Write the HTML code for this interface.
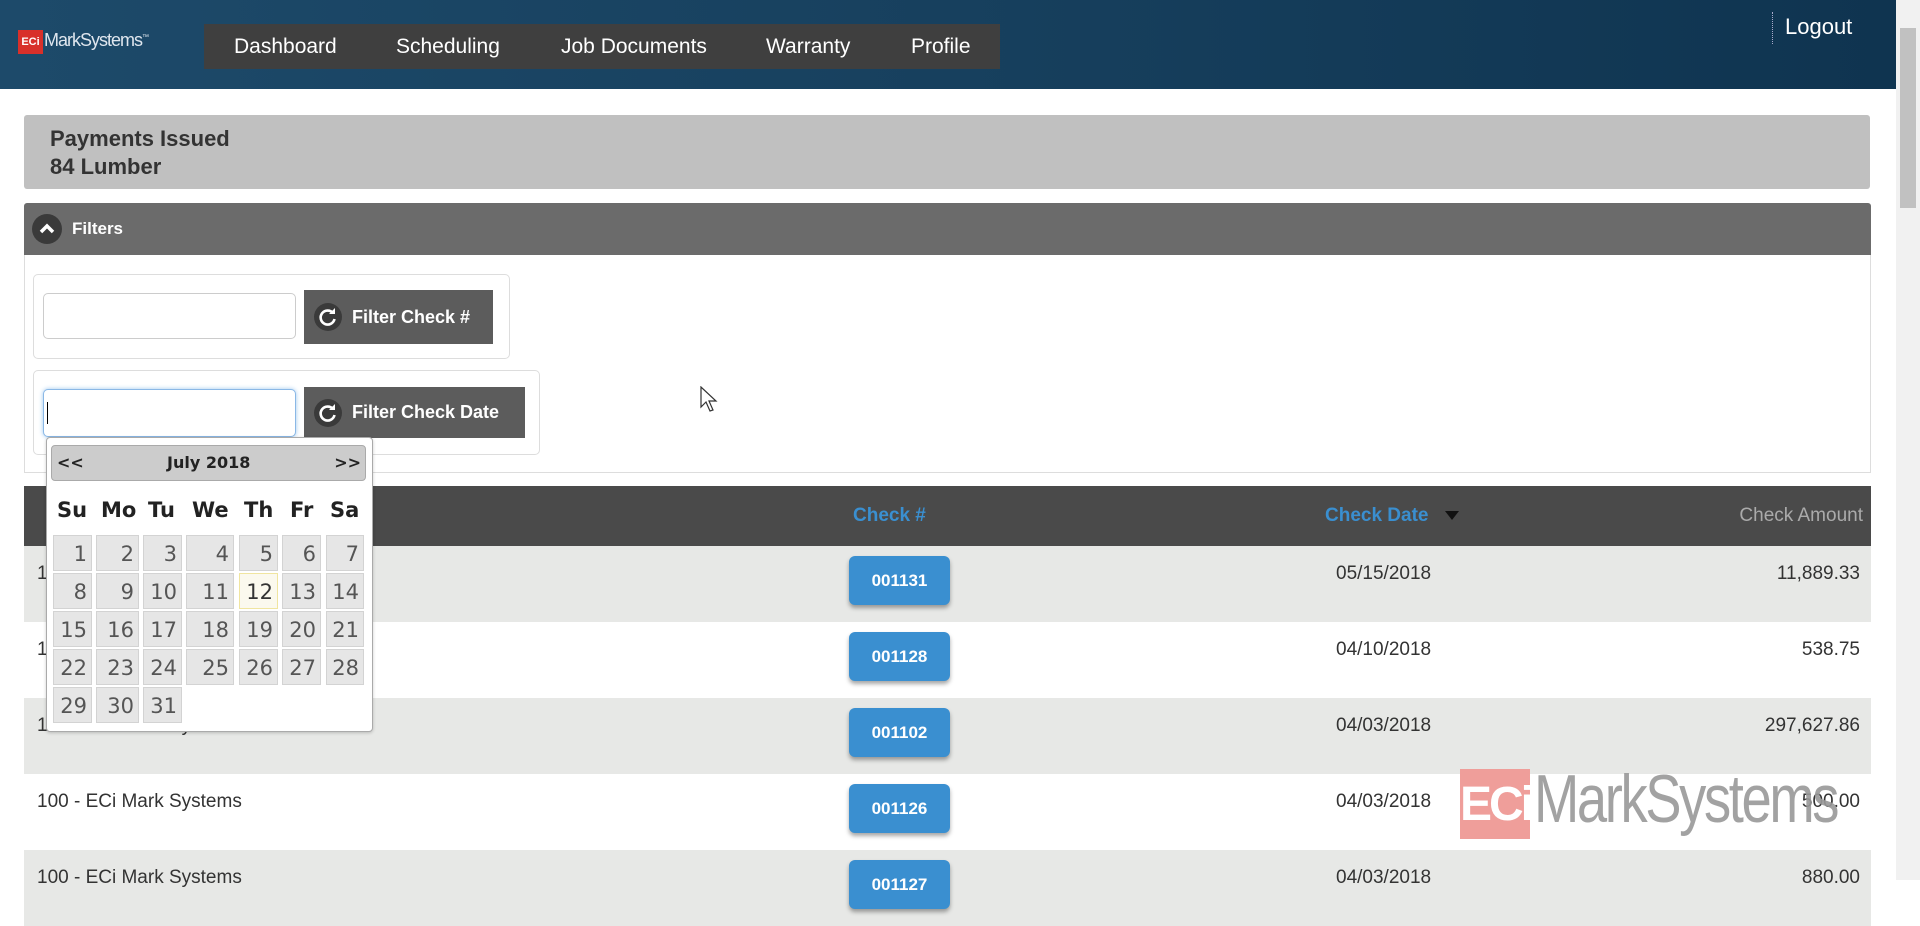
<!DOCTYPE html>
<html><head><meta charset="utf-8"><style>
*{box-sizing:border-box;margin:0;padding:0}
body{width:1920px;height:880px;overflow:hidden;background:#fff;font-family:"Liberation Sans",Arial,sans-serif;position:relative}
.abs{position:absolute}
.hdr{left:0;top:0;width:1896px;height:89px;background:linear-gradient(90deg,#1d4a6a,#17405e 50%,#0f3450);}
.nav{left:204px;top:24px;width:796px;height:45px;background:#3f3f3f;color:#fff;font-size:21px;white-space:nowrap}
.nav span{position:absolute;top:11px}
.sb{left:1896px;top:0;width:24px;height:880px;background:#f1f1f1}
.title{left:24px;top:115px;width:1846px;height:74px;background:#c0c0c0;border-radius:3px;font-weight:bold;font-size:22px;color:#333;padding:10px 26px;line-height:28px}
.fbar{left:24px;top:203px;width:1847px;height:52px;background:#6b6b6b;border-radius:3px 3px 0 0;color:#fff;font-weight:bold;font-size:17px;line-height:52px;padding-left:48px}
.fbody{left:24px;top:255px;width:1847px;height:218px;border:1px solid #ddd;border-top:none;background:#fff}
.box{border:1px solid #ddd;border-radius:5px}
.inp{border:1px solid #ccc;border-radius:5px;background:#fff}
.btn{background:#5c5c5c;color:#fff;font-weight:bold;font-size:18px;display:flex;align-items:center}
.ic{width:28px;height:28px;border-radius:50%;background:#3a3a3a;margin:0 10px 0 10px;display:flex;align-items:center;justify-content:center}
.th{left:24px;top:486px;width:1847px;height:60px;background:#4a4a4a}
.row{left:24px;width:1847px;height:76px;font-size:19px;color:#333}
.cb{position:absolute;left:825px;top:10px;width:101px;height:49px;background:#3a8fd0;border-radius:6px;color:#fff;font-weight:bold;font-size:17px;text-align:center;line-height:49px;box-shadow:0 3px 4px rgba(0,0,0,.35)}
.cal{left:46px;top:437px;width:327px;height:295px;background:#fff;border:1px solid #aaa;border-radius:4px;box-shadow:0 1px 3px rgba(0,0,0,.2);font-family:"DejaVu Sans",Verdana,sans-serif}
.ch{position:absolute;left:4px;top:7px;width:315px;height:36px;background:#ccc;border:1px solid #aaa;border-radius:4px;font-weight:bold;font-size:16px;line-height:34px;color:#222}
.cell{position:absolute;background:#e6e6e6;border:1px solid #d3d3d3;font-size:21px;color:#555;text-align:right;padding-right:4px;line-height:36px;height:36px}
.dn{position:absolute;top:60px;font-weight:bold;font-size:21px;color:#222}
</style></head><body>
<div class="abs hdr"></div>
<div class="abs" style="left:18px;top:30px;width:25px;height:24px;background:#d8302a;color:#fff;font-size:11px;font-weight:bold;line-height:24px;text-align:center">ECi</div>
<div class="abs" style="left:44px;top:30px;color:#dfe6ee;font-size:18px;letter-spacing:-1px">MarkSystems<sup style="font-size:7px">™</sup></div>
<div class="abs nav"><span style="left:30px">Dashboard</span><span style="left:192px">Scheduling</span><span style="left:357px">Job Documents</span><span style="left:562px">Warranty</span><span style="left:707px">Profile</span></div>
<div class="abs" style="left:1772px;top:12px;height:32px;border-left:1px dotted #aac"></div>
<div class="abs" style="left:1785px;top:14px;color:#fff;font-size:22px">Logout</div>
<div class="abs sb"><div style="position:absolute;left:4px;top:28px;width:16px;height:180px;background:#c1c1c1"></div></div>
<div class="abs title">Payments Issued<br>84 Lumber</div>
<div class="abs fbar">Filters</div>
<div class="abs" style="left:32px;top:214px;width:30px;height:30px;border-radius:50%;background:#3a3a3a"><svg width="30" height="30" viewBox="0 0 30 30"><path d="M9 18l6-6 6 6" fill="none" stroke="#fff" stroke-width="3.5"/></svg></div>
<div class="abs fbody"></div>
<div class="abs box" style="left:33px;top:274px;width:477px;height:85px"></div>
<div class="abs inp" style="left:43px;top:293px;width:253px;height:46px"></div>
<div class="abs btn" style="left:304px;top:290px;width:189px;height:54px"><div class="ic"><svg width="20" height="20" viewBox="0 0 20 20"><path d="M15 6A7 7 0 1 0 16.5 12" fill="none" stroke="#fff" stroke-width="2.6"/><path d="M11 5h6V-1z" fill="#fff" transform="translate(0,2)"/></svg></div>Filter Check #</div>
<div class="abs box" style="left:33px;top:370px;width:507px;height:85px"></div>
<div class="abs inp" style="left:43px;top:389px;width:253px;height:48px;border-color:#8ab8e6;box-shadow:0 0 5px #9cc6ee"><div style="position:absolute;left:3px;top:12px;width:1px;height:22px;background:#000"></div></div>
<div class="abs btn" style="left:304px;top:387px;width:221px;height:51px"><div class="ic"><svg width="20" height="20" viewBox="0 0 20 20"><path d="M15 6A7 7 0 1 0 16.5 12" fill="none" stroke="#fff" stroke-width="2.6"/><path d="M11 5h6V-1z" fill="#fff" transform="translate(0,2)"/></svg></div>Filter Check Date</div>
<svg class="abs" style="left:700px;top:386px" width="20" height="28" viewBox="0 0 20 28"><path d="M1 1v20l5-5 4 9 3-1-4-9h7z" fill="#fff" stroke="#333" stroke-width="1.2"/></svg>
<div class="abs th"></div>
<div class="abs" style="left:24px;top:486px;width:1847px;height:60px;font-size:19px;line-height:60px;font-weight:bold">
<span style="position:absolute;left:829px;color:#3a8fd0">Check #</span>
<span style="position:absolute;left:1301px;color:#3a8fd0">Check Date</span>
<svg style="position:absolute;left:1421px;top:25px" width="14" height="9" viewBox="0 0 14 9"><path d="M0 0h14L7 9z" fill="#111"/></svg>
<span style="position:absolute;right:8px;color:#aaa;font-weight:normal">Check Amount</span></div>
<div class="abs row" style="top:546px;background:#e7e8e6"><span style="position:absolute;left:13px;top:17px">100 - ECi Mark Systems</span><div class="cb">001131</div><span style="position:absolute;left:1312px;top:17px">05/15/2018</span><span style="position:absolute;right:11px;top:17px">11,889.33</span></div>
<div class="abs row" style="top:622px;background:#fff"><span style="position:absolute;left:13px;top:17px">100 - ECi Mark Systems</span><div class="cb">001128</div><span style="position:absolute;left:1312px;top:17px">04/10/2018</span><span style="position:absolute;right:11px;top:17px">538.75</span></div>
<div class="abs row" style="top:698px;background:#e7e8e6"><span style="position:absolute;left:13px;top:17px">100 - ECi Mark Systems</span><div class="cb">001102</div><span style="position:absolute;left:1312px;top:17px">04/03/2018</span><span style="position:absolute;right:11px;top:17px">297,627.86</span></div>
<div class="abs row" style="top:774px;background:#fff"><span style="position:absolute;left:13px;top:17px">100 - ECi Mark Systems</span><div class="cb">001126</div><span style="position:absolute;left:1312px;top:17px">04/03/2018</span><span style="position:absolute;right:11px;top:17px">500.00</span></div>
<div class="abs row" style="top:850px;background:#e7e8e6"><span style="position:absolute;left:13px;top:17px">100 - ECi Mark Systems</span><div class="cb">001127</div><span style="position:absolute;left:1312px;top:17px">04/03/2018</span><span style="position:absolute;right:11px;top:17px">880.00</span></div>
<div class="abs" style="left:1460px;top:769px;width:70px;height:70px;background:#ef9e9a;color:#fff;font-weight:bold;font-size:48px;line-height:72px;text-align:center;letter-spacing:-3px">ECi</div>
<div class="abs" style="left:1534px;top:760px;color:#999;font-size:68px;letter-spacing:-3px;opacity:.9;transform:scaleX(.8);transform-origin:left">MarkSystems</div>
<div class="abs cal">
<div class="ch"><span style="position:absolute;left:5px">&lt;&lt;</span><span style="position:absolute;left:115px">July 2018</span><span style="position:absolute;right:4px">&gt;&gt;</span></div>
<span class="dn" style="left:10px">Su</span><span class="dn" style="left:54px">Mo</span><span class="dn" style="left:101px">Tu</span><span class="dn" style="left:145px">We</span><span class="dn" style="left:197px">Th</span><span class="dn" style="left:243px">Fr</span><span class="dn" style="left:283px">Sa</span>
</div>
<div id="g"></div>
<script>
var xs=[[53,92],[96,139],[143,182],[186,234],[239,278],[282,321],[326,364]],h='';
for(var d=1;d<=31;d++){var i=d-1,c=i%7,r=Math.floor(i/7),y=535+r*38;
var s=d==12?'background:#fbf9ee;border-color:#f0e5a0;color:#333;':'';
h+='<div class="cell abs" style="left:'+xs[c][0]+'px;top:'+y+'px;width:'+(xs[c][1]-xs[c][0])+'px;'+s+'font-family:DejaVu Sans,Verdana,sans-serif">'+d+'</div>';}
document.getElementById('g').innerHTML=h;
</script>
</body></html>
